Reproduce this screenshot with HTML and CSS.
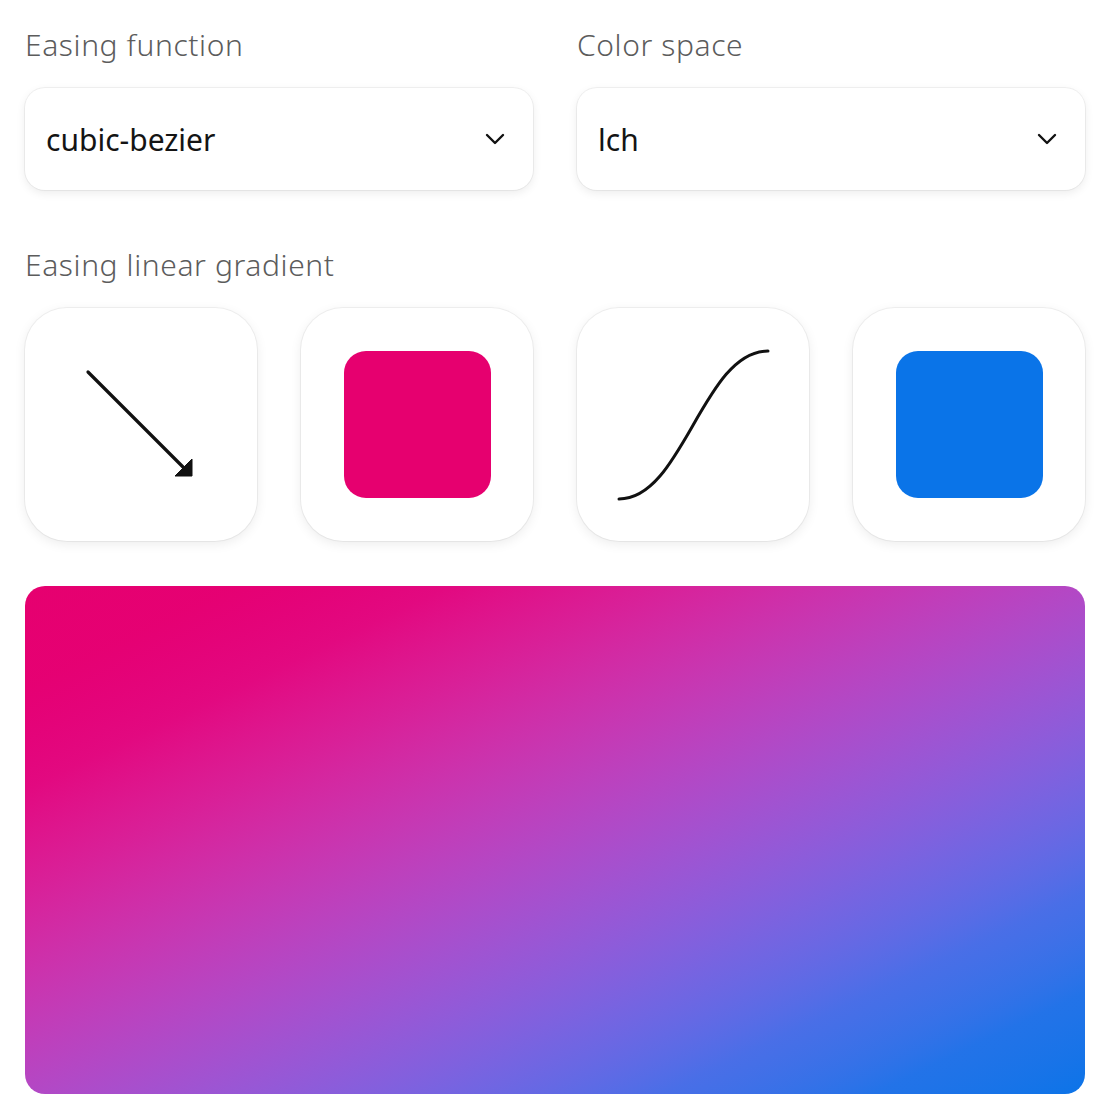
FILE: index.html
```html
<!DOCTYPE html>
<html lang="en">
<head>
<meta charset="utf-8">
<title>Easing gradient</title>
<link rel="stylesheet" href="styles.css">
</head>
<body>
<main class="page">
  <section class="selects">
    <div class="field">
      <div class="label">Easing function</div>
      <div class="select">
        <span class="select-value">cubic-bezier</span>
        <svg class="chevron" width="24" height="24" viewBox="0 0 24 24"><path d="M4 8l8 8 8-8" fill="none" stroke="#111" stroke-width="2.4" stroke-linecap="round" stroke-linejoin="round"/></svg>
      </div>
    </div>
    <div class="field">
      <div class="label">Color space</div>
      <div class="select">
        <span class="select-value">lch</span>
        <svg class="chevron" width="24" height="24" viewBox="0 0 24 24"><path d="M4 8l8 8 8-8" fill="none" stroke="#111" stroke-width="2.4" stroke-linecap="round" stroke-linejoin="round"/></svg>
      </div>
    </div>
  </section>

  <div class="label label-gradient">Easing linear gradient</div>
  <section class="tiles">
    <div class="tile">
      <svg class="tile-art" viewBox="0 0 232 232">
        <line x1="63" y1="63" x2="158" y2="158" stroke="#111" stroke-width="3.2" stroke-linecap="round"/>
        <polygon points="167,167 150,167 167,150" fill="#111" stroke="#111" stroke-width="1" stroke-linejoin="round"/>
      </svg>
    </div>
    <div class="tile"><div class="swatch swatch-pink"></div></div>
    <div class="tile">
      <svg class="tile-art" viewBox="0 0 232 232">
        <path d="M42 190 C106 190 126 42 191 42" fill="none" stroke="#111" stroke-width="3" stroke-linecap="round"/>
      </svg>
    </div>
    <div class="tile"><div class="swatch swatch-blue"></div></div>
  </section>

  <div class="preview"></div>
</main>
</body>
</html>
```

FILE: styles.css
```css
* {
  box-sizing: border-box;
}

html, body {
  margin: 0;
  background: #ffffff;
}

body {
  font-family: "Noto Sans", "Open Sans", sans-serif;
  color: #111;
}

.page {
  padding: 25px 22px 0 25px;
  width: 1107px;
}

.selects {
  display: grid;
  grid-template-columns: 1fr 1fr;
  column-gap: 44px;
}

.label {
  font-size: 30px;
  font-weight: 300;
  letter-spacing: 0.6px;
  line-height: 40px;
  color: #5c5c5c;
  height: 40px;
}

.select {
  margin-top: 23px;
  height: 102px;
  border-radius: 20px;
  background: #fff;
  box-shadow: 0 0 0 1px rgba(0, 0, 0, 0.05), 0 3px 10px rgba(0, 0, 0, 0.08);
  display: flex;
  align-items: center;
  justify-content: space-between;
  padding: 0 26px 0 21px;
}

.select-value {
  font-size: 30px;
  color: #141414;
}

.chevron {
  display: block;
}

.label-gradient {
  margin-top: 55px;
}

.tiles {
  margin-top: 23px;
  display: grid;
  grid-template-columns: repeat(4, 232px);
  column-gap: 44px;
}

.tile {
  height: 233px;
  border-radius: 42px;
  background: #fff;
  box-shadow: 0 0 0 1px rgba(0, 0, 0, 0.05), 0 3px 12px rgba(0, 0, 0, 0.08);
  display: flex;
  align-items: center;
  justify-content: center;
}

.tile-art {
  width: 232px;
  height: 232px;
  display: block;
}

.swatch {
  width: 147px;
  height: 147px;
  border-radius: 22px;
}

.swatch-pink {
  background: #e6006f;
}

.swatch-blue {
  background: #0a74e8;
}

.preview {
  margin-top: 45px;
  height: 508px;
  border-radius: 20px;
  background: linear-gradient(in lch to bottom right,
    #e6006f 0%,
    color-mix(in lch, #e6006f 98%, #0a74e8) 10%,
    color-mix(in lch, #e6006f 91%, #0a74e8) 20%,
    color-mix(in lch, #e6006f 78%, #0a74e8) 30%,
    color-mix(in lch, #e6006f 64%, #0a74e8) 40%,
    color-mix(in lch, #e6006f 50%, #0a74e8) 50%,
    color-mix(in lch, #e6006f 36%, #0a74e8) 60%,
    color-mix(in lch, #e6006f 22%, #0a74e8) 70%,
    color-mix(in lch, #e6006f 9%, #0a74e8) 80%,
    color-mix(in lch, #e6006f 2%, #0a74e8) 90%,
    #0a74e8 100%);
}
```
